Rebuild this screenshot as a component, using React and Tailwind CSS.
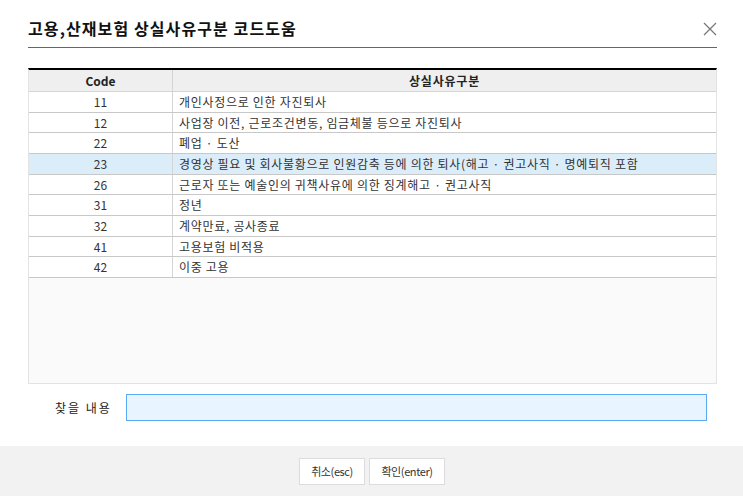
import React from "react";

const rows = [
  ["11", "개인사정으로 인한 자진퇴사"],
  ["12", "사업장 이전, 근로조건변동, 임금체불 등으로 자진퇴사"],
  ["22", "폐업 · 도산"],
  ["23", "경영상 필요 및 회사불황으로 인원감축 등에 의한 퇴사(해고 · 권고사직 · 명예퇴직 포함"],
  ["26", "근로자 또는 예술인의 귀책사유에 의한 징계해고 · 권고사직"],
  ["31", "정년"],
  ["32", "계약만료, 공사종료"],
  ["41", "고용보험 비적용"],
  ["42", "이중 고용"],
];

export default function App() {
  return (
    <div
      className="w-[743px] h-[496px] flex flex-col bg-white text-[#333]"
      style={{ fontFamily: '"Noto Sans CJK KR", "Noto Sans", sans-serif' }}
    >
      <div className="ml-[28px] mr-[26px] h-[48px] flex justify-between items-start pt-[16px] border-b border-[#666]">
        <div className="text-[16px] font-bold leading-[24px] tracking-[1.1px] text-[#111]">고용,산재보험 상실사유구분 코드도움</div>
        <svg width="14" height="14" viewBox="0 0 14 14" className="mt-[6px]">
          <path d="M1 1 L13 13 M13 1 L1 13" stroke="#777" strokeWidth="1.2" fill="none" />
        </svg>
      </div>

      <div className="ml-[28px] mr-[26px] mt-[20px] h-[316px] border-t-2 border-black border-x border-b border-x-[#e3e3e3] border-b-[#e3e3e3] bg-[#fafafa] flex flex-col">
        <div className="flex h-[22px] bg-[#efefef] border-b border-[#d4d4d4] text-[12px] font-bold text-[#222] leading-[21px]">
          <div className="w-[144px] shrink-0 text-center border-r border-[#d4d4d4]">Code</div>
          <div className="flex-1 text-center tracking-[0.8px]">상실사유구분</div>
        </div>
        {rows.map(([c, t]) => (
          <div
            key={c}
            className={
              "flex h-[20.67px] border-b border-[#c8c8c8] text-[12px] leading-[19.5px] " +
              (c === "23" ? "bg-[#dcedfa]" : "bg-white")
            }
          >
            <div className="w-[144px] shrink-0 text-center border-r border-[#d4d4d4]">{c}</div>
            <div className="flex-1 pl-[6px] whitespace-nowrap overflow-hidden tracking-[0.7px]">{t}</div>
          </div>
        ))}
      </div>

      <div className="flex items-center mt-[10px] pl-[55px]">
        <div className="w-[71px] text-[12px] tracking-[2px] text-[#222]">찾을 내용</div>
        <div className="w-[581px] h-[27px] bg-[#e8f4ff] border border-[#5aa9f5]" />
      </div>

      <div className="flex-1" />

      <div className="h-[50px] bg-[#f2f2f2] flex items-center justify-center gap-[4px] pl-[1px]">
        <div className="w-[66px] h-[27px] bg-white border border-[#dcdcdc] text-[11px] tracking-[-0.4px] flex items-center justify-center text-[#333]">취소(esc)</div>
        <div className="w-[76px] h-[27px] bg-white border border-[#dcdcdc] text-[11px] tracking-[-0.4px] flex items-center justify-center text-[#333]">확인(enter)</div>
      </div>
    </div>
  );
}
